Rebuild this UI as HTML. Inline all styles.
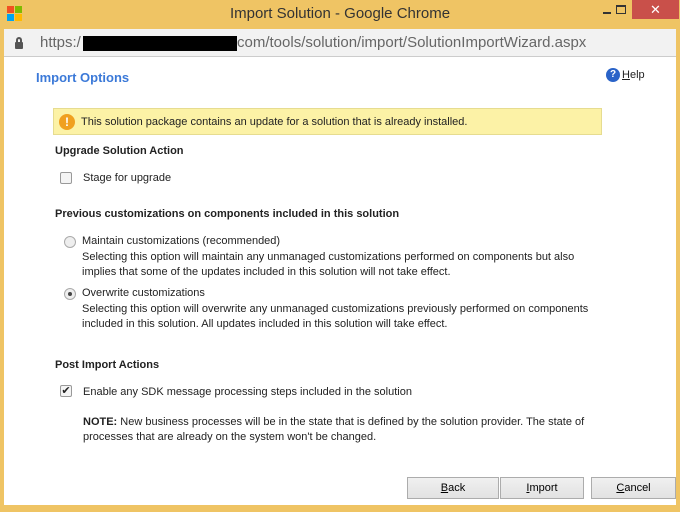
<!DOCTYPE html>
<html><head><style>
*{margin:0;padding:0;box-sizing:border-box}
body{width:680px;height:512px;background:#efc464;font-family:"Liberation Sans",sans-serif;position:relative;overflow:hidden;color:#222}
.abs{position:absolute}
.title{left:0;top:0;width:680px;height:28px;text-align:center;font-size:15px;line-height:28px;color:#333}
.close{left:632px;top:0;width:47px;height:19px;background:#c9504a;color:#fff;text-align:center;font-size:13px;line-height:19px}
.addr{left:4px;top:29px;width:672px;height:28px;background:#f2f2f2;border-bottom:1px solid #ccc;font-size:15px;line-height:28px;color:#666}
.content{left:4px;top:57px;width:672px;height:448px;background:#fff}
.t{font-size:11px;position:absolute;white-space:nowrap}
.b{font-weight:bold}
.btn{position:absolute;top:477px;height:22px;border:1px solid #acacac;background:linear-gradient(#f0f0f0,#e2e2e2);font-size:11px;text-align:center;line-height:20px;color:#000}
.cb{position:absolute;width:12px;height:12px;border:1px solid #999;border-radius:2px;background:#f4f4f4}
.rd{position:absolute;width:12px;height:12px;border:1px solid #aaa;border-radius:50%;background:#eee}
</style></head><body>
<div class="abs" style="left:7px;top:6px;width:7px;height:7px;background:#f25022"></div>
<div class="abs" style="left:15px;top:6px;width:7px;height:7px;background:#7fba00"></div>
<div class="abs" style="left:7px;top:14px;width:7px;height:7px;background:#00a4ef"></div>
<div class="abs" style="left:15px;top:14px;width:7px;height:7px;background:#ffb900"></div>
<div class="abs title">Import Solution - Google Chrome</div>
<div class="abs" style="left:603px;top:12px;width:8px;height:2px;background:#333"></div>
<div class="abs" style="left:616px;top:5px;width:10px;height:9px;border:1px solid #333;border-top-width:2px"></div>
<div class="abs close">✕</div>
<div class="abs addr"><span style="position:absolute;left:11px;top:13px;width:8px;height:7px;background:#555;border-radius:1px"></span><span style="position:absolute;left:12px;top:8px;width:6px;height:6px;border:2px solid #555;border-radius:3px 3px 0 0;border-bottom:none"></span><span style="position:absolute;left:36px">https:/</span><span style="position:absolute;left:79px;top:7px;width:154px;height:15px;background:#000"></span><span style="position:absolute;left:233px">com/tools/solution/import/SolutionImportWizard.aspx</span></div>
<div class="abs content"></div>
<div class="t b" style="left:36px;top:70px;font-size:13px;color:#3b79d8">Import Options</div>
<div class="abs" style="left:606px;top:68px;width:14px;height:14px;border-radius:50%;background:#2a63c8;color:#fff;font-size:10px;text-align:center;line-height:14px;font-weight:bold">?</div>
<div class="t" style="left:622px;top:69px"><u>H</u>elp</div>
<div class="abs" style="left:53px;top:108px;width:549px;height:27px;background:#fcf2a6;border:1px solid #e6dc90"></div>
<div class="abs" style="left:59px;top:114px;width:16px;height:16px;border-radius:50%;background:#f0a020;color:#fff;font-weight:bold;font-size:12px;text-align:center;line-height:16px">!</div>
<div class="t" style="left:81px;top:116px">This solution package contains an update for a solution that is already installed.</div>
<div class="t b" style="left:55px;top:145px">Upgrade Solution Action</div>
<div class="cb" style="left:60px;top:172px"></div>
<div class="t" style="left:83px;top:172px">Stage for upgrade</div>
<div class="t b" style="left:55px;top:208px">Previous customizations on components included in this solution</div>
<div class="rd" style="left:64px;top:236px"></div>
<div class="t" style="left:82px;top:235px">Maintain customizations (recommended)</div>
<div class="t" style="left:82px;top:251px">Selecting this option will maintain any unmanaged customizations performed on components but also</div>
<div class="t" style="left:82px;top:266px">implies that some of the updates included in this solution will not take effect.</div>
<div class="rd" style="left:64px;top:288px"><div style="position:absolute;left:3px;top:3px;width:4px;height:4px;border-radius:50%;background:#444"></div></div>
<div class="t" style="left:82px;top:287px">Overwrite customizations</div>
<div class="t" style="left:82px;top:303px">Selecting this option will overwrite any unmanaged customizations previously performed on components</div>
<div class="t" style="left:82px;top:318px">included in this solution. All updates included in this solution will take effect.</div>
<div class="t b" style="left:55px;top:359px">Post Import Actions</div>
<div class="cb" style="left:60px;top:385px;font-size:11px;line-height:10px;text-align:center;color:#222">✔</div>
<div class="t" style="left:83px;top:386px">Enable any SDK message processing steps included in the solution</div>
<div class="t" style="left:83px;top:416px"><b>NOTE:</b> New business processes will be in the state that is defined by the solution provider. The state of</div>
<div class="t" style="left:83px;top:431px">processes that are already on the system won't be changed.</div>
<div class="btn" style="left:407px;width:92px"><u>B</u>ack</div>
<div class="btn" style="left:500px;width:84px"><u>I</u>mport</div>
<div class="btn" style="left:591px;width:85px"><u>C</u>ancel</div>
</body></html>
